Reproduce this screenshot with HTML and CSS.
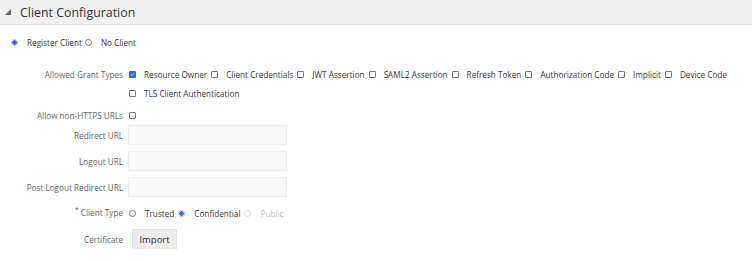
FILE: index.html
```html
<!DOCTYPE html>
<html lang="en">
<head>
    <meta charset="UTF-8">
    <title>Client Configuration</title>
    <link rel="stylesheet" href="styles.css">
</head>
<body>
    <div class="section-header">
        <svg class="toggle" width="8" height="8" viewBox="0 0 8 8"><polygon points="7,1 7,7 1,7" fill="#666"/></svg>
        <span class="section-title">Client Configuration</span>
    </div>

    <div class="client-mode">
        <label class="opt"><input type="radio" name="mode" checked> Register Client</label>
        <label class="opt"><input type="radio" name="mode"> No Client</label>
    </div>

    <div class="form">
        <div class="row row-grants">
            <div class="label">Allowed Grant Types</div>
            <div class="field grants">
                <label class="opt"><input type="checkbox" checked> Resource Owner</label>
                <label class="opt"><input type="checkbox"> Client Credentials</label>
                <label class="opt"><input type="checkbox"> JWT Assertion</label>
                <label class="opt"><input type="checkbox"> SAML2 Assertion</label>
                <label class="opt"><input type="checkbox"> Refresh Token</label>
                <label class="opt"><input type="checkbox"> Authorization Code</label>
                <label class="opt"><input type="checkbox"> Implicit</label>
                <label class="opt"><input type="checkbox"> Device Code</label>
                <label class="opt"><input type="checkbox"> TLS Client Authentication</label>
            </div>
        </div>
        <div class="row row-https">
            <div class="label">Allow non-HTTPS URLs</div>
            <div class="field"><input type="checkbox"></div>
        </div>
        <div class="row tight">
            <div class="label">Redirect URL</div>
            <div class="field"><input type="text" class="text"></div>
        </div>
        <div class="row">
            <div class="label">Logout URL</div>
            <div class="field"><input type="text" class="text"></div>
        </div>
        <div class="row">
            <div class="label">Post Logout Redirect URL</div>
            <div class="field"><input type="text" class="text"></div>
        </div>
        <div class="row row-type">
            <div class="label"><sup class="req">*</sup> Client Type</div>
            <div class="field">
                <label class="opt"><input type="radio" name="ctype"> Trusted</label>
                <label class="opt"><input type="radio" name="ctype" checked> Confidential</label>
                <label class="opt disabled"><input type="radio" name="ctype" disabled> Public</label>
            </div>
        </div>
        <div class="row">
            <div class="label">Certificate</div>
            <div class="field"><button class="button">Import</button></div>
        </div>
    </div>
</body>
</html>
```

FILE: styles.css
```css
body {
    margin: 0;
    font-family: "Open Sans", "Noto Sans", sans-serif;
    font-size: 8.2px;
    color: #3a3a3a;
    background: #fff;
}
.section-header {
    height: 24px;
    background-color: #f0f0f0;
    border-bottom: 1px solid #e4e4e4;
    display: flex;
    align-items: center;
}
.toggle {
    margin-left: 4px;
    margin-right: 8px;
}
.section-title {
    font-size: 12.4px;
    color: #333;
}
.client-mode {
    margin-top: 9px;
    height: 16px;
    padding-left: 11px;
    display: flex;
    align-items: center;
}
.client-mode .opt {
    margin-right: 3px;
}
.client-mode input[type="radio"] {
    margin-right: 9px;
}
.form {
    display: flex;
    flex-direction: column;
}
.row {
    display: flex;
    align-items: center;
    height: 20px;
    margin-top: 6px;
}
.row.tight {
    margin-top: 0;
}
.row-grants {
    margin-top: 15px;
    height: 40px;
    align-items: flex-start;
}
.row-https {
    margin-top: 0;
}
.label {
    width: 123px;
    flex: none;
    text-align: right;
    color: #666;
    margin-right: 6px;
}
.row-grants .label {
    line-height: 19px;
}
.row-type .label {
    margin-top: -3px;
}
.field {
    display: flex;
    align-items: center;
}
.grants {
    flex-wrap: wrap;
    line-height: 19px;
}
.opt {
    display: inline-flex;
    align-items: center;
    margin-right: 4px;
    white-space: nowrap;
}
.opt.disabled {
    color: #bbb;
}
.req {
    font-size: 7px;
    color: #555;
}
input[type="checkbox"], input[type="radio"] {
    appearance: none;
    -webkit-appearance: none;
    width: 7px;
    height: 7px;
    margin: 0 8px 0 0;
    border: 1px solid #777;
    background: #fff;
    box-sizing: border-box;
}
input[type="checkbox"] {
    border-radius: 1px;
}
input[type="checkbox"]:checked {
    background: #2c6bd6 url("data:image/svg+xml,%3Csvg xmlns='http://www.w3.org/2000/svg' viewBox='0 0 8 8'%3E%3Cpath d='M1.5 4.2 3.2 5.8 6.5 2' fill='none' stroke='white' stroke-width='1.3'/%3E%3C/svg%3E") center/100% no-repeat;
    border-color: #2c6bd6;
}
input[type="radio"] {
    border-radius: 50%;
    margin-right: 9px;
}
input[type="radio"]:checked {
    border-color: #a9c4ec;
    background: radial-gradient(circle, #2c6bd6 0 2px, #fff 2.5px);
}
input[type="radio"]:disabled {
    border-color: #ddd;
}
.text {
    width: 159px;
    height: 20px;
    box-sizing: border-box;
    margin-left: -1px;
    background: #f8f8f8;
    border: 1px solid #ececec;
}
.button {
    font-family: inherit;
    font-size: 9.5px;
    color: #333;
    margin-left: 3px;
    width: 45px;
    height: 21px;
    padding: 0;
    background: #ebebeb;
    border: 1px solid #e2e2e2;
    border-radius: 1px;
}
```
